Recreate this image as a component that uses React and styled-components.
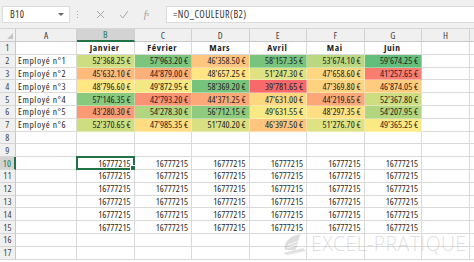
import React from 'react';
import styled, { createGlobalStyle } from 'styled-components';

const Global = createGlobalStyle`
  html, body { margin: 0; padding: 0; background: #fff; overflow: hidden; }
  * { box-sizing: border-box; }
`;

const FONT = `"Open Sans", "Liberation Sans", Arial, sans-serif`;

const Sheet = styled.div`
  position: relative;
  width: 474px;
  height: 262px;
  overflow: hidden;
  font-family: ${FONT};
  font-stretch: condensed;
  color: #222;
  background: #fff;
`;

const FormulaBar = styled.div`
  height: 29px;
  display: flex;
  align-items: center;
  background: #f0f0f0;
  padding: 0 0 0 2px;
  border-bottom: 1px solid #d6d6d6;
`;

const NameBox = styled.div`
  width: 68px;
  height: 17px;
  background: #fff;
  border: 1px solid #dcdcdc;
  display: flex;
  align-items: center;
  justify-content: space-between;
  padding: 0 5px 0 7px;
  font-size: 10px;
  letter-spacing: 0.4px;
  color: #333;
`;

const Caret = styled.span`
  width: 0;
  height: 0;
  border-left: 3px solid transparent;
  border-right: 3px solid transparent;
  border-top: 3px solid #666;
`;

const Dots = styled.div`
  width: 2px;
  margin: 0 10px 0 7px;
  display: flex;
  flex-direction: column;
  gap: 2px;
  & > span { width: 1px; height: 1px; background: #aaa; display: block; }
`;

const IconBtn = styled.div`
  width: 23px;
  display: flex;
  align-items: center;
  justify-content: center;
  color: #9a9a9a;
  font-size: 10px;
  font-style: italic;
  font-family: "Liberation Serif", serif;
`;

const Sub = styled.sub`
  font-size: 6px;
`;

const FormulaInput = styled.div`
  flex: 1;
  height: 17px;
  margin-left: 8px;
  background: #fff;
  border: 1px solid #dcdcdc;
  border-right: none;
  display: flex;
  align-items: center;
  padding-left: 6px;
  font-size: 10px;
  letter-spacing: 0.45px;
  color: #333;
`;

const Grid = styled.div`
  display: grid;
  grid-template-columns: 16px 61px repeat(6, 57.5px) 48px 1fr;
  grid-template-rows: 13px repeat(17, 12.8px);
  font-size: 9.5px;
`;

const Corner = styled.div`
  background: #f0f0f0;
  border-right: 1px solid #c8c8c8;
  border-bottom: 1px solid #c8c8c8;
  position: relative;
  &::after {
    content: '';
    position: absolute;
    right: 2px;
    bottom: 2px;
    width: 0;
    height: 0;
    border-left: 6px solid transparent;
    border-bottom: 6px solid #c4c4c4;
  }
`;

const ColHead = styled.div`
  background: ${p => (p.$active ? '#d3d3d3' : '#f0f0f0')};
  color: ${p => (p.$active ? '#217346' : '#444')};
  border-right: 1px solid #d0d0d0;
  border-bottom: ${p => (p.$active ? '2px solid #217346' : '1px solid #c8c8c8')};
  display: flex;
  align-items: center;
  justify-content: center;
  font-size: 9.5px;
`;

const RowHead = styled.div`
  background: ${p => (p.$active ? '#d3d3d3' : '#f0f0f0')};
  color: ${p => (p.$active ? '#217346' : '#444')};
  border-right: ${p => (p.$active ? '2px solid #217346' : '1px solid #c8c8c8')};
  border-bottom: 1px solid #d6d6d6;
  display: flex;
  align-items: center;
  justify-content: center;
  font-size: 9.5px;
  letter-spacing: 0.3px;
`;

const Cell = styled.div`
  position: relative;
  background: ${p => p.$bg || '#fff'};
  border-right: 1px solid ${p => (p.$bg ? 'rgba(255,255,255,0.35)' : '#dadada')};
  border-bottom: 1px solid ${p => (p.$bg ? 'rgba(255,255,255,0.35)' : '#dadada')};
  display: flex;
  align-items: center;
  justify-content: ${p => (p.$align === 'left' ? 'flex-start' : p.$align === 'center' ? 'center' : 'flex-end')};
  padding: 0 3px 0 2px;
  font-weight: ${p => (p.$bold ? 700 : 400)};
  letter-spacing: ${p => (p.$align ? '0.6px' : '0')};
  white-space: nowrap;
  color: #1f1f1f;
`;

const Selection = styled.div`
  position: absolute;
  inset: -1px -1px -1px -1px;
  border: 2px solid #217346;
  pointer-events: none;
  &::after {
    content: '';
    position: absolute;
    right: -4px;
    bottom: -4px;
    width: 5px;
    height: 5px;
    background: #217346;
    border: 1px solid #fff;
  }
`;

const Watermark = styled.div`
  position: absolute;
  left: 282px;
  top: 233px;
  display: flex;
  align-items: center;
  gap: 3px;
  white-space: nowrap;
  color: rgba(160, 160, 160, 0.35);
  font-family: ${FONT};
  font-stretch: normal;
  font-weight: 300;
  font-size: 19.5px;
  letter-spacing: 0.4px;
  line-height: 22px;
  pointer-events: none;
`;

const cols = ['A', 'B', 'C', 'D', 'E', 'F', 'G', 'H'];
const months = ['Janvier', 'Février', 'Mars', 'Avril', 'Mai', 'Juin'];
const data = [
  [52368.25, 57963.2, 46358.5, 58157.35, 53674.1, 59674.25],
  [45632.1, 44879.0, 48657.25, 51247.3, 47658.6, 41257.65],
  [48796.6, 49872.95, 58369.2, 39781.65, 47369.8, 46874.05],
  [57146.35, 42793.2, 44371.25, 47631.0, 44219.65, 52367.8],
  [43280.3, 54278.3, 56712.15, 49631.55, 48297.35, 54207.95],
  [52370.65, 47985.35, 51740.2, 46397.5, 51276.7, 49365.25],
];

const all = data.flat().sort((a, b) => a - b);
const min = all[0];
const max = all[all.length - 1];
const mid = (all[17] + all[18]) / 2;
const RED = [248, 105, 107];
const YEL = [255, 235, 132];
const GRN = [99, 190, 123];
const mix = (a, b, t) => a.map((v, i) => Math.round(v + (b[i] - v) * t));
const scale = v => {
  const c = v <= mid ? mix(RED, YEL, (v - min) / (mid - min)) : mix(YEL, GRN, (v - mid) / (max - mid));
  return `rgb(${c[0]},${c[1]},${c[2]})`;
};
const fmt = v => {
  const [i, d] = v.toFixed(2).split('.');
  return `${i.slice(0, i.length - 3)}'${i.slice(-3)}.${d} €`;
};

export default function App() {
  const rows = [];
  for (let r = 1; r <= 17; r++) {
    const active = r === 10;
    rows.push(<RowHead key={`h${r}`} $active={active}>{r}</RowHead>);
    cols.forEach((c, ci) => {
      const key = `${c}${r}`;
      if (r === 1) {
        rows.push(
          <Cell key={key} $align="center" $bold>
            {ci >= 1 && ci <= 6 ? months[ci - 1] : ''}
          </Cell>
        );
      } else if (r >= 2 && r <= 7) {
        if (ci === 0) rows.push(<Cell key={key} $align="left">{`Employé n°${r - 1}`}</Cell>);
        else if (ci <= 6) {
          const v = data[r - 2][ci - 1];
          rows.push(<Cell key={key} $bg={scale(v)}>{fmt(v)}</Cell>);
        } else rows.push(<Cell key={key} />);
      } else if (r >= 10 && r <= 15 && ci >= 1 && ci <= 6) {
        rows.push(
          <Cell key={key}>
            16777215
            {r === 10 && ci === 1 && <Selection />}
          </Cell>
        );
      } else rows.push(<Cell key={key} />);
    });
    rows.push(<Cell key={`z${r}`} />);
  }

  return (
    <Sheet>
      <Global />
      <FormulaBar>
        <NameBox>
          B10
          <Caret />
        </NameBox>
        <Dots>
          <span />
          <span />
          <span />
        </Dots>
        <IconBtn>
          <svg width="9" height="9" viewBox="0 0 9 9">
            <path d="M1 1L8 8M8 1L1 8" stroke="#a8a8a8" strokeWidth="1" />
          </svg>
        </IconBtn>
        <IconBtn>
          <svg width="10" height="9" viewBox="0 0 10 9">
            <path d="M1 5L3.8 8L9 1" stroke="#a8a8a8" strokeWidth="1" fill="none" />
          </svg>
        </IconBtn>
        <IconBtn>
          f<Sub>x</Sub>
        </IconBtn>
        <FormulaInput>=NO_COULEUR(B2)</FormulaInput>
      </FormulaBar>
      <Grid>
        <Corner />
        {cols.map(c => (
          <ColHead key={c} $active={c === 'B'}>
            {c}
          </ColHead>
        ))}
        <ColHead />
        {rows}
      </Grid>
      <Watermark>
        <svg width="26" height="22" viewBox="0 0 26 22">
          <path d="M3 17 C1 10 7 3 19 1 C15 7 17 12 13 17 Z" fill="rgba(160,160,160,0.35)" />
          <path d="M1 20 L21 15 L24 18 L5 22 Z" fill="rgba(160,160,160,0.3)" />
          <path d="M5 15 L23 9 M6 12 L22 6" stroke="rgba(255,255,255,0.7)" strokeWidth="1.2" />
        </svg>
        <span>EXCEL-PRATIQUE</span>
      </Watermark>
    </Sheet>
  );
}
